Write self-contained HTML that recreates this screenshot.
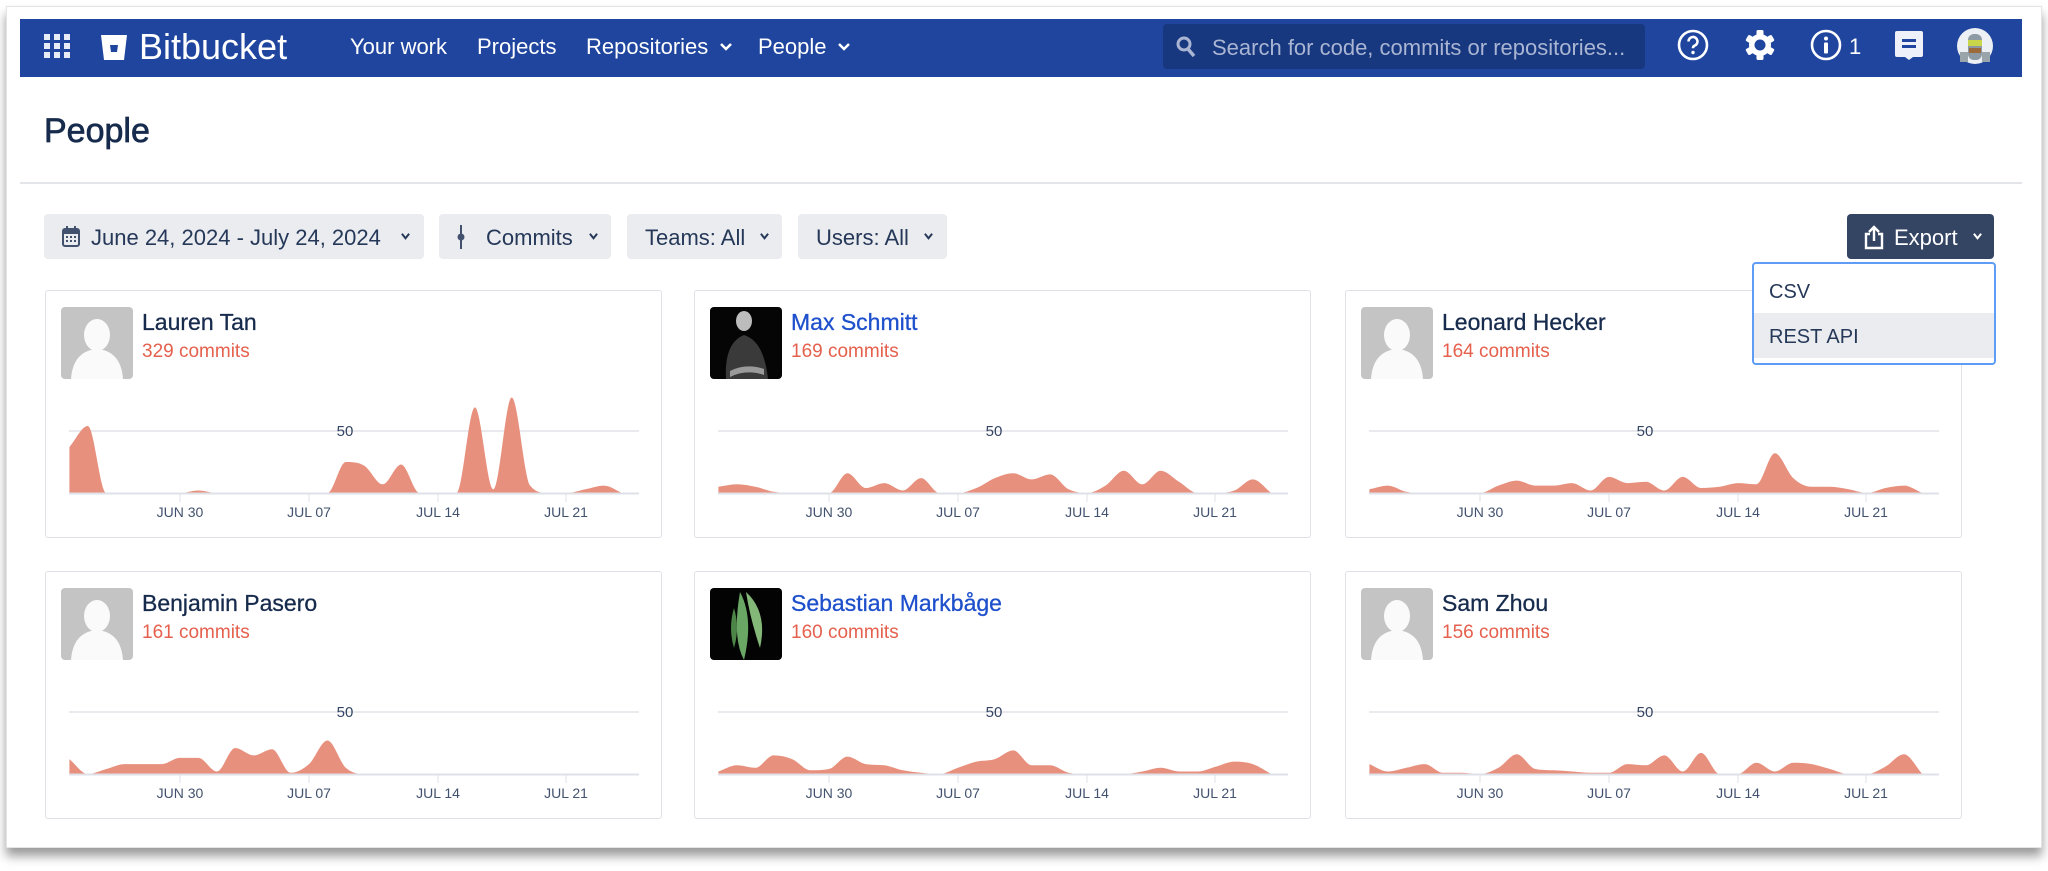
<!DOCTYPE html>
<html><head><meta charset="utf-8">
<style>
*{box-sizing:border-box;margin:0;padding:0}
body{width:2048px;height:871px;background:#fff;font-family:"Liberation Sans",sans-serif;position:relative;overflow:hidden;color:#172b4d}
.page{position:absolute;left:6px;top:6px;width:2036px;height:842px;background:#fff;border:1px solid #e4e4e4;box-shadow:0 8px 10px rgba(0,0,0,.4)}
.nav{position:absolute;left:20px;top:19px;width:2002px;height:58px;background:#1f459e}
.abs{position:absolute}
.navt{position:absolute;color:#fff;font-size:22px;top:34px}
.search{position:absolute;left:1163px;top:24px;width:482px;height:45px;background:#17377f;border-radius:4px}
.search span{position:absolute;left:49px;top:11px;color:#a9b5d3;font-size:22px}
h1{position:absolute;left:44px;top:112px;font-size:34px;font-weight:normal;color:#172b4d;-webkit-text-stroke:0.7px #172b4d}
.sep{position:absolute;left:20px;top:182px;width:2002px;height:2px;background:#e4e5e9}
.btn{position:absolute;top:214px;height:45px;background:#ebecf0;border-radius:4px;font-size:22px;color:#253858}
.btn span{position:absolute;top:11px;white-space:nowrap}
.chev{position:absolute;top:18px;width:9px;height:9px}
.card{position:absolute;width:617px;height:248px;border:1px solid #dfe1e6;border-radius:3px;background:#fff}
.av{position:absolute;left:15px;top:16px;width:72px;height:72px;border-radius:4px;background:#c4c4c4;overflow:hidden}
.name{position:absolute;left:96px;top:18px;font-size:23px;color:#172b4d;white-space:nowrap;-webkit-text-stroke:0.3px currentColor}
.name.l{color:#1f50cc}
.cm{position:absolute;left:96px;top:50px;font-size:19px;color:#e5604d;white-space:nowrap}
.card svg.ch{position:absolute;left:0;top:0}
.dd{position:absolute;left:1752px;top:262px;width:244px;height:103px;background:#fff;border:2px solid #5e9cf5;border-radius:4px;z-index:5}
.dd div{position:absolute;left:0;width:240px;height:45px;font-size:20px;color:#253858;padding:13px 0 0 15px}
</style></head><body>
<div class="page"></div>
<div class="nav"></div>
<svg class="abs" style="left:44px;top:34px" width="26" height="24" viewBox="0 0 26 24" fill="#e8ecf7">
<rect x="0" y="0" width="6" height="6"/><rect x="10" y="0" width="6" height="6"/><rect x="20" y="0" width="6" height="6"/>
<rect x="0" y="9" width="6" height="6"/><rect x="10" y="9" width="6" height="6"/><rect x="20" y="9" width="6" height="6"/>
<rect x="0" y="18" width="6" height="6"/><rect x="10" y="18" width="6" height="6"/><rect x="20" y="18" width="6" height="6"/>
</svg>
<svg class="abs" style="left:101px;top:35px" width="26" height="25" viewBox="0 0 26 25"><path d="M0 0H26L23 25H3Z" fill="#fff"/><path d="M9 10H17L16 17H10Z" fill="#1f459e"/></svg>
<div class="navt" style="left:139px;top:26px;font-size:36px">Bitbucket</div>
<div class="navt" style="left:350px">Your work</div>
<div class="navt" style="left:477px">Projects</div>
<div class="navt" style="left:586px">Repositories</div>
<svg class="abs" style="left:720px;top:43px" width="12" height="8" viewBox="0 0 12 8"><path d="M1 1L6 6L11 1" stroke="#fff" stroke-width="2.5" fill="none"/></svg>
<div class="navt" style="left:758px">People</div>
<svg class="abs" style="left:838px;top:43px" width="12" height="8" viewBox="0 0 12 8"><path d="M1 1L6 6L11 1" stroke="#fff" stroke-width="2.5" fill="none"/></svg>
<div class="search"><svg class="abs" style="left:13px;top:12px" width="20" height="22" viewBox="0 0 20 22"><circle cx="8" cy="8" r="6" stroke="#a9b5d3" stroke-width="3" fill="none"/><path d="M12 13L18 20" stroke="#a9b5d3" stroke-width="3.5"/></svg><span>Search for code, commits or repositories...</span></div>
<svg class="abs" style="left:1677px;top:29px" width="32" height="32" viewBox="0 0 32 32"><circle cx="16" cy="16" r="14" stroke="#fff" stroke-width="2.6" fill="none"/><path d="M11.5 12.5a4.5 4.5 0 1 1 6 4.2c-1.2.5-1.5 1.2-1.5 2.6" stroke="#fff" stroke-width="2.6" fill="none"/><circle cx="16" cy="23.5" r="1.7" fill="#fff"/></svg>
<svg class="abs" style="left:1744px;top:29px" width="32" height="32" viewBox="0 0 32 32"><g fill="#fff"><circle cx="16" cy="16" r="11"/><rect x="12.5" y="1" width="7" height="30" rx="1.5"/><rect x="12.5" y="1" width="7" height="30" rx="1.5" transform="rotate(60 16 16)"/><rect x="12.5" y="1" width="7" height="30" rx="1.5" transform="rotate(120 16 16)"/></g><circle cx="16" cy="16" r="5.5" fill="#1f459e"/></svg>
<svg class="abs" style="left:1810px;top:29px" width="32" height="32" viewBox="0 0 32 32"><circle cx="16" cy="16" r="14" stroke="#fff" stroke-width="2.6" fill="none"/><circle cx="16" cy="9.5" r="2" fill="#fff"/><rect x="14" y="13.5" width="4" height="11" rx="1" fill="#fff"/></svg>
<div class="navt" style="left:1849px;font-size:22px">1</div>
<svg class="abs" style="left:1894px;top:30px" width="30" height="30" viewBox="0 0 30 30"><path d="M3 1H27Q29 1 29 3V25Q29 27 27 27H19L15 30L11 27H3Q1 27 1 25V3Q1 1 3 1Z" fill="#eef1fa"/><rect x="8" y="9" width="14" height="3" fill="#1f459e"/><rect x="8" y="15" width="14" height="3" fill="#1f459e"/></svg>
<svg class="abs" style="left:1957px;top:28px" width="36" height="36" viewBox="0 0 36 36"><circle cx="18" cy="18" r="18" fill="#eceff3"/><rect x="11" y="6" width="14" height="26" rx="6" fill="#8e9aa3"/><rect x="11" y="12" width="14" height="6" fill="#c9d649"/><rect x="12" y="20" width="12" height="5" fill="#9c6a3a"/><rect x="3" y="24" width="8" height="10" fill="#9aa4ab"/><rect x="25" y="24" width="8" height="10" fill="#9aa4ab"/></svg>

<h1>People</h1>
<div class="sep"></div>

<div class="btn" style="left:44px;width:380px">
<svg class="abs" style="left:18px;top:12px" width="18" height="21" viewBox="0 0 18 21"><rect x="1" y="3" width="16" height="17" rx="2" fill="none" stroke="#42526e" stroke-width="2"/><rect x="1" y="3" width="16" height="5" fill="#42526e"/><rect x="4" y="0" width="2" height="4" fill="#42526e"/><rect x="12" y="0" width="2" height="4" fill="#42526e"/><g fill="#42526e"><rect x="4" y="10" width="2" height="2"/><rect x="8" y="10" width="2" height="2"/><rect x="12" y="10" width="2" height="2"/><rect x="4" y="14" width="2" height="2"/><rect x="8" y="14" width="2" height="2"/><rect x="12" y="14" width="2" height="2"/></g></svg>
<span style="left:47px">June 24, 2024 - July 24, 2024</span>
<svg class="chev" style="left:357px" viewBox="0 0 10 8"><path d="M1 1L5 6L9 1" stroke="#253858" stroke-width="2.2" fill="none"/></svg></div>
<div class="btn" style="left:439px;width:172px">
<svg class="abs" style="left:17px;top:11px" width="10" height="24" viewBox="0 0 10 24"><rect x="4" y="0" width="2" height="24" fill="#42526e"/><circle cx="5" cy="12" r="3.5" fill="#42526e"/></svg>
<span style="left:47px">Commits</span>
<svg class="chev" style="left:150px" viewBox="0 0 10 8"><path d="M1 1L5 6L9 1" stroke="#253858" stroke-width="2.2" fill="none"/></svg></div>
<div class="btn" style="left:627px;width:155px"><span style="left:18px">Teams: All</span>
<svg class="chev" style="left:133px" viewBox="0 0 10 8"><path d="M1 1L5 6L9 1" stroke="#253858" stroke-width="2.2" fill="none"/></svg></div>
<div class="btn" style="left:798px;width:149px"><span style="left:18px">Users: All</span>
<svg class="chev" style="left:126px" viewBox="0 0 10 8"><path d="M1 1L5 6L9 1" stroke="#253858" stroke-width="2.2" fill="none"/></svg></div>

<div class="btn" style="left:1847px;width:147px;background:#344563;color:#fff">
<svg class="abs" style="left:17px;top:10px" width="20" height="26" viewBox="0 0 20 26"><path d="M6 10H2V24H18V10H14" stroke="#fff" stroke-width="2.4" fill="none"/><path d="M10 17V3M5 8L10 3L15 8" stroke="#fff" stroke-width="2.4" fill="none"/></svg>
<span style="left:47px">Export</span>
<svg class="chev" style="left:126px" viewBox="0 0 10 8"><path d="M1 1L5 6L9 1" stroke="#fff" stroke-width="2.2" fill="none"/></svg></div>
<div class="dd"><div style="top:4px">CSV</div><div style="top:49px;background:#ebecf0">REST API</div></div>

<div id="cards"></div>

<script>
var people=[
{n:"Lauren Tan",c:"329 commits",x:45,y:290,a:0,v:[37,54,0,0,0,0,0,2,0,0,0,0,0,0,0,25,22,7,23,0,0,0,69,3,77,6,0,0,3,6,0]},
{n:"Max Schmitt",c:"169 commits",x:694,y:290,a:1,l:1,v:[5,7,5,1,0,0,0,16,4,8,2,12,0,0,4,12,16,11,15,3,0,6,18,7,18,9,0,0,2,11,0]},
{n:"Leonard Hecker",c:"164 commits",x:1345,y:290,a:0,v:[3,6,1,0,0,0,0,6,10,6,6,8,2,13,8,9,2,13,4,5,8,7,32,12,5,5,3,0,4,6,0]},
{n:"Benjamin Pasero",c:"161 commits",x:45,y:571,a:0,v:[12,0,4,8,8,8,13,13,2,21,15,20,1,8,27,5,0,0,0,0,0,0,0,0,0,0,0,0,0,0,0]},
{n:"Sebastian Markbåge",c:"160 commits",x:694,y:571,a:2,l:1,v:[2,7,5,15,12,3,4,14,8,7,3,1,0,5,10,12,19,7,7,1,0,0,0,2,5,2,2,6,10,8,0]},
{n:"Sam Zhou",c:"156 commits",x:1345,y:571,a:0,v:[8,2,5,8,1,1,0,5,16,4,3,2,1,1,8,7,15,2,17,0,0,9,2,9,8,4,0,0,6,16,0]}
];
function mono(xs,ys){var n=xs.length,d=[],m=[];for(var i=0;i<n-1;i++)d.push((ys[i+1]-ys[i])/(xs[i+1]-xs[i]));m[0]=d[0];m[n-1]=d[n-2];for(i=1;i<n-1;i++){m[i]=(d[i-1]*d[i]<=0)?0:(d[i-1]+d[i])/2;}
for(i=0;i<n-1;i++){if(d[i]==0){m[i]=0;m[i+1]=0;continue;}var a=m[i]/d[i],b=m[i+1]/d[i],s=a*a+b*b;if(s>9){var t=3/Math.sqrt(s);m[i]=t*a*d[i];m[i+1]=t*b*d[i];}}
var p="M"+xs[0]+" 202L"+xs[0]+" "+ys[0].toFixed(1);for(i=0;i<n-1;i++){var h=(xs[i+1]-xs[i])/3;p+="C"+(xs[i]+h).toFixed(1)+" "+(ys[i]+m[i]*h).toFixed(1)+" "+(xs[i+1]-h).toFixed(1)+" "+(ys[i+1]-m[i+1]*h).toFixed(1)+" "+xs[i+1].toFixed(1)+" "+ys[i+1].toFixed(1);}return p+"L"+xs[n-1]+" 202Z";}
var html="";
var sil='<svg width="72" height="72" viewBox="0 0 72 72"><ellipse cx="36" cy="28" rx="13" ry="16" fill="#fafafa"/><path d="M10 72Q12 44 36 42Q60 44 62 72Z" fill="#fafafa"/></svg>';
var maxav='<svg width="72" height="72" viewBox="0 0 72 72"><rect width="72" height="72" fill="#050505"/><ellipse cx="34" cy="14" rx="8" ry="10" fill="#bcbcbc"/><path d="M16 72Q14 36 34 28Q54 34 58 72Z" fill="#3a3a3a"/><path d="M20 64Q36 56 54 62L54 68Q36 62 20 70Z" fill="#9a9a9a"/></svg>';
var sebav='<svg width="72" height="72" viewBox="0 0 72 72"><rect width="72" height="72" fill="#020302"/><path d="M30 4Q44 30 34 72Q22 50 30 4Z" fill="#6aa664"/><path d="M36 4Q58 24 50 60Q40 30 36 4Z" fill="#84b879"/><path d="M24 20Q18 40 24 60Q30 40 24 20Z" fill="#4d8447"/></svg>';
people.forEach(function(p){
 var xs=[],ys=[];for(var i=0;i<31;i++){xs.push(23.4+i*18.43);ys.push(202-p.v[i]*1.24);}
 html+='<div class="card" style="left:'+p.x+'px;top:'+p.y+'px"><svg class="ch" width="617" height="248">'+
 '<line x1="23" y1="140" x2="593" y2="140" stroke="#e3e4e8" stroke-width="1.5"/>'+
 '<path d="'+mono(xs,ys)+'" fill="#e8907e"/>'+
 '<line x1="23" y1="202.5" x2="593" y2="202.5" stroke="#dfe1e8" stroke-width="2"/>'+
 [134,263,392,520].map(function(t){return '<line x1="'+t+'" y1="203" x2="'+t+'" y2="211" stroke="#dfe1e8"/>';}).join('')+
 '<text x="299" y="145" font-size="15" fill="#344563" text-anchor="middle" font-family="Liberation Sans">50</text>'+
 '<text x="134" y="226" font-size="14" fill="#42526e" text-anchor="middle" font-family="Liberation Sans">JUN 30</text>'+
 '<text x="263" y="226" font-size="14" fill="#42526e" text-anchor="middle" font-family="Liberation Sans">JUL 07</text>'+
 '<text x="392" y="226" font-size="14" fill="#42526e" text-anchor="middle" font-family="Liberation Sans">JUL 14</text>'+
 '<text x="520" y="226" font-size="14" fill="#42526e" text-anchor="middle" font-family="Liberation Sans">JUL 21</text>'+
 '</svg><div class="av">'+(p.a==1?maxav:p.a==2?sebav:sil)+'</div><div class="name'+(p.l?' l':'')+'">'+p.n+'</div><div class="cm">'+p.c+'</div></div>';
});
document.getElementById("cards").innerHTML=html;
</script>
</body></html>
